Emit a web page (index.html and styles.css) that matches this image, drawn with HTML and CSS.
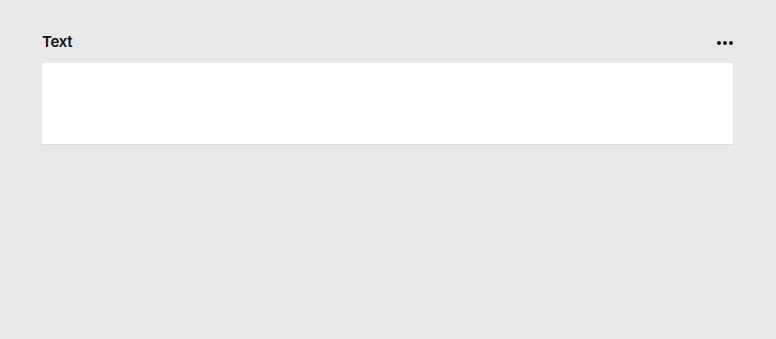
FILE: index.html
```html
<!DOCTYPE html>
<html>
<head>
<meta charset="utf-8">
<link rel="stylesheet" href="styles.css">
</head>
<body>
<div class="page">
  <div class="panel">
    <div class="panel-header">
      <span class="panel-title">Text</span>
      <button class="more" aria-label="More">
        <span class="dot"></span><span class="dot"></span><span class="dot"></span>
      </button>
    </div>
    <div class="card"></div>
  </div>
</div>
</body>
</html>
```
FILE: styles.css
```css
html, body {
  margin: 0;
  padding: 0;
  background: #e9e9e9;
  width: 776px;
  height: 339px;
  overflow: hidden;
}
.page {
  padding: 30px 43px 0 42px;
  font-family: Inter, "Liberation Sans", sans-serif;
}
.panel-header {
  display: flex;
  justify-content: space-between;
  align-items: center;
  height: 22px;
  margin-bottom: 11px;
}
.panel-title {
  font-size: 15px;
  font-weight: 600;
  color: #111;
  letter-spacing: -0.3px;
}
.more {
  display: flex;
  gap: 2px;
  padding: 0;
  border: 0;
  background: none;
  margin-top: 4px;
}
.dot {
  width: 4px;
  height: 4px;
  border-radius: 50%;
  background: #1a1a1a;
}
.card {
  background: #fff;
  height: 81px;
  box-shadow: 0 1px 1px rgba(0,0,0,0.06);
}
```
